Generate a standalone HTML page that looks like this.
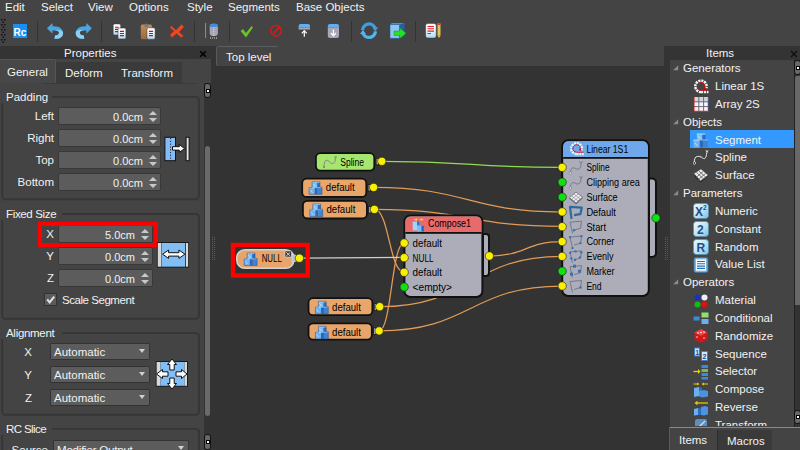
<!DOCTYPE html>
<html><head><meta charset="utf-8">
<style>
*{margin:0;padding:0;box-sizing:border-box}
html,body{width:800px;height:450px;overflow:hidden;background:#444;font-family:"Liberation Sans",sans-serif;font-size:11.5px;color:#f2f2f2}
.a{position:absolute}
.t{position:absolute;white-space:nowrap;line-height:14px}
#menu .t{top:0px}
.sep{position:absolute;top:21px;width:1px;height:21px;background:#333}
.inp{position:absolute;background:#5c5c5c;border:1px solid #383838;height:18px;border-radius:2px}
.inp .v{position:absolute;right:17px;top:2px;line-height:14px;color:#f2f2f2;font-size:11px}
.spin{position:absolute;right:3px;top:2.5px;width:8px;height:11px}
.grp{position:absolute;border:2px solid #363636;border-radius:4px}
.gl{position:absolute;height:2px;background:#363636}
.lbl{position:absolute;text-align:right;line-height:14px}
.dd{position:absolute;background:#5c5c5c;border:1px solid #333;height:17px;border-radius:1px}
.dd .v{position:absolute;left:3px;top:1px;line-height:14px}
.dd .ar{position:absolute;right:4px;top:5px;width:0;height:0;border-left:3.5px solid transparent;border-right:3.5px solid transparent;border-top:4px solid #d0d0d0}
.it{position:absolute;line-height:14px;white-space:nowrap}
.node{position:absolute;border:2px solid #111;border-radius:6px}
.dot{position:absolute;width:10px;height:10px;border-radius:50%;background:#f5f000;border:1px solid #222}
.dot.g{background:#10e010}
.nt{position:absolute;color:#111;font-size:11px;line-height:13px;white-space:nowrap}
</style></head><body>
<!-- menu -->
<div id="menu">
<div class="t" style="left:5px">Edit</div>
<div class="t" style="left:41px">Select</div>
<div class="t" style="left:88px">View</div>
<div class="t" style="left:129px">Options</div>
<div class="t" style="left:187px">Style</div>
<div class="t" style="left:228px">Segments</div>
<div class="t" style="left:296px">Base Objects</div>
</div>
<!-- toolbar -->
<div class="sep" style="left:37px"></div>
<div class="sep" style="left:101px"></div>
<div class="sep" style="left:194px"></div>
<div class="sep" style="left:229px"></div>
<div class="sep" style="left:351px"></div>
<div class="sep" style="left:415px"></div>

<!-- dark band under toolbar -->
<div class="a" style="left:0;top:46px;width:800px;height:404px;background:#343434"></div>

<!-- Properties panel -->
<div class="a" style="left:0;top:59px;width:204px;height:391px;background:#444"></div><div class="a" style="left:204px;top:59px;width:12px;height:391px;background:#333"></div><div class="a" style="left:204px;top:59px;width:7px;height:24px;background:#444"></div>
<div class="t" style="left:64px;top:46px">Properties</div>

<!-- props title -->
<svg class="a" style="left:199px;top:50px" width="8" height="8"><path d="M1.2 1.2L6.8 6.8M6.8 1.2L1.2 6.8" stroke="#000" stroke-width="1.6"/></svg>
<!-- tabs -->
<div class="a" style="left:55px;top:62px;width:127px;height:21px;background:#3a3a3a"></div>
<div class="a" style="left:0;top:59px;width:56px;height:24px;background:#474747;border-top:1px solid #555;border-right:1px solid #555;border-top-right-radius:2px"></div>
<div class="t" style="left:7px;top:65px">General</div>
<div class="t" style="left:65px;top:66px">Deform</div>
<div class="t" style="left:121px;top:66px">Transform</div>
<div class="a" style="left:43px;top:83px;width:153px;height:1px;background:#3a3a3a"></div>
<!-- Padding group -->
<svg class="a" style="left:0;top:0" width="210" height="450"><path d="M2.2 103V197.2L4.2 199.2H196.9L198.9 197.2V98.9L196.9 96.9H52M2.2 220V316.8L4.2 318.8H196.9L198.9 316.8V216L196.9 214H62M2.2 339V412.7L4.2 414.7H196.9L198.9 412.7V335.1L196.9 333.1H62M2.2 435V460M198.9 460V431L196.9 428.9H52" stroke="#363636" stroke-width="1.9" fill="none"/></svg>
<div class="t" style="left:6px;top:90px">Padding</div>
<div class="lbl" style="left:10px;width:44px;top:109px">Left</div>
<div class="lbl" style="left:10px;width:44px;top:131px">Right</div>
<div class="lbl" style="left:10px;width:44px;top:153px">Top</div>
<div class="lbl" style="left:10px;width:44px;top:175px">Bottom</div>
<div class="inp" style="left:58px;top:107px;width:103px"><div class="v">0.0cm</div><svg class="spin" viewBox="0 0 8 11"><path d="M0 4L4 0L8 4ZM0 7L8 7L4 11Z" fill="#c8c8c8"/></svg></div>
<div class="inp" style="left:58px;top:129px;width:103px"><div class="v">0.0cm</div><svg class="spin" viewBox="0 0 8 11"><path d="M0 4L4 0L8 4ZM0 7L8 7L4 11Z" fill="#c8c8c8"/></svg></div>
<div class="inp" style="left:58px;top:151px;width:103px"><div class="v">0.0cm</div><svg class="spin" viewBox="0 0 8 11"><path d="M0 4L4 0L8 4ZM0 7L8 7L4 11Z" fill="#c8c8c8"/></svg></div>
<div class="inp" style="left:58px;top:173px;width:103px"><div class="v">0.0cm</div><svg class="spin" viewBox="0 0 8 11"><path d="M0 4L4 0L8 4ZM0 7L8 7L4 11Z" fill="#c8c8c8"/></svg></div>
<svg class="a" style="left:164px;top:136px" width="27" height="26" viewBox="0 0 27 26">
<rect x="0.9" y="1.3" width="10.6" height="23.4" fill="#82bef5" stroke="#111" stroke-width="1"/>
<path d="M6.6 2V24" stroke="#2a2035" stroke-width="1" stroke-dasharray="1.2 1.6"/>
<path d="M8.5 10.7H15.3V8.5L20.6 12.6L15.3 16.4V14.1H8.5Z" fill="#fff" stroke="#111" stroke-width="1"/>
<rect x="22.1" y="1.3" width="3" height="23.4" fill="#e6e6e6" stroke="#111" stroke-width="1"/>
</svg>
<!-- Fixed size group -->
<div class="t" style="left:6px;top:207px;letter-spacing:-0.35px">Fixed Size</div>
<div class="lbl" style="left:30px;width:24px;top:227px">X</div>
<div class="lbl" style="left:30px;width:24px;top:249px">Y</div>
<div class="lbl" style="left:30px;width:24px;top:271px">Z</div>
<div class="inp" style="left:58px;top:225px;width:95px"><div class="v">5.0cm</div><svg class="spin" viewBox="0 0 8 11"><path d="M0 4L4 0L8 4ZM0 7L8 7L4 11Z" fill="#c8c8c8"/></svg></div>
<div class="inp" style="left:58px;top:247px;width:95px"><div class="v">0.0cm</div><svg class="spin" viewBox="0 0 8 11"><path d="M0 4L4 0L8 4ZM0 7L8 7L4 11Z" fill="#c8c8c8"/></svg></div>
<div class="inp" style="left:58px;top:269px;width:95px"><div class="v">0.0cm</div><svg class="spin" viewBox="0 0 8 11"><path d="M0 4L4 0L8 4ZM0 7L8 7L4 11Z" fill="#c8c8c8"/></svg></div>
<div class="a" style="left:38px;top:222px;width:120px;height:25px;border:4px solid #ff0000"></div>
<svg class="a" style="left:156px;top:241px" width="34" height="28" viewBox="0 0 34 28">
<rect x="0.9" y="1.2" width="32.1" height="25.3" fill="#111"/>
<rect x="1.7" y="2" width="3.8" height="23.7" fill="#d8d8d8"/>
<rect x="6" y="2" width="23.3" height="23.7" fill="#82bef5"/>
<rect x="30" y="2" width="2.2" height="23.7" fill="#d8d8d8"/>
<path d="M6.6 13.2L12.6 9V11.7H22.9V9L28.9 13.2L22.9 17.4V15.1H12.6V17.4Z" fill="#fff" stroke="#111" stroke-width="1"/>
</svg>
<div class="a" style="left:44px;top:293px;width:13px;height:13px;background:#5c5c5c;border:1px solid #333"></div>
<svg class="a" style="left:44px;top:293px" width="13" height="13"><path d="M3.2 6.4L5.6 9.3L10.2 3.6" stroke="#e2e2e2" stroke-width="2.1" fill="none"/></svg>
<div class="t" style="left:62px;top:293px;letter-spacing:-0.45px">Scale Segment</div>
<!-- Alignment group -->
<div class="t" style="left:6px;top:326px;letter-spacing:-0.3px">Alignment</div>
<div class="lbl" style="left:20px;width:12px;top:345px">X</div>
<div class="lbl" style="left:20px;width:12px;top:368px">Y</div>
<div class="lbl" style="left:20px;width:12px;top:391px">Z</div>
<div class="dd" style="left:50px;top:343px;width:100px"><div class="v">Automatic</div><div class="ar"></div></div>
<div class="dd" style="left:50px;top:366px;width:100px"><div class="v">Automatic</div><div class="ar"></div></div>
<div class="dd" style="left:50px;top:389px;width:100px"><div class="v">Automatic</div><div class="ar"></div></div>
<svg class="a" style="left:155px;top:358px" width="34" height="32" viewBox="0 0 34 32">
<rect x="0.8" y="3.2" width="32" height="25.4" fill="#111"/>
<rect x="1.6" y="4" width="3.9" height="23.8" fill="#d8d8d8"/>
<rect x="5.5" y="4" width="24.2" height="23.8" fill="#82bef5"/>
<rect x="29.7" y="4" width="2.3" height="23.8" fill="#d8d8d8"/>
<g fill="#fff" stroke="#111" stroke-width="1">
<path d="M17 1L21.5 6.5H19.2V12H14.8V6.5H12.5Z"/>
<path d="M17 31L21.5 25.5H19.2V20H14.8V25.5H12.5Z"/>
<path d="M1.5 16L7.5 11.5V13.8H13V18.2H7.5V20.5Z"/>
<path d="M32 16L26.5 11.5V13.8H21V18.2H26.5V20.5Z"/>
</g>
</svg>
<!-- RC slice -->
<div class="t" style="left:6px;top:422px;letter-spacing:-0.6px">RC Slice</div>
<div class="lbl" style="left:10px;width:38px;top:443px">Source</div>
<div class="dd" style="left:53px;top:440px;width:136px"><div class="v" style="top:2px;letter-spacing:-0.2px">Modifier Output</div><div class="ar"></div></div>
<!-- props scrollbar -->
<div class="a" style="left:205px;top:146px;width:5px;height:270px;background:#6a6a6a;border-radius:2.5px"></div>
<div class="a" style="left:204px;top:83px;width:7px;height:15px;background:#686868;border-radius:3px;border:1px solid #111"></div>
<div class="a" style="left:207px;top:90px;width:2px;height:2px;background:#fff;outline:1px solid #000"></div>
<div class="a" style="left:204px;top:434px;width:7px;height:16px;background:#686868;border-radius:3px;border:1px solid #111"></div>
<div class="a" style="left:207px;top:441px;width:2px;height:2px;background:#fff;outline:1px solid #000"></div>
<!-- canvas -->
<div class="a" style="left:216px;top:46px;width:448px;height:20px;background:#444"></div>
<div class="a" style="left:216px;top:66px;width:448px;height:384px;background:#333"></div>
<div class="a" style="left:216px;top:47px;width:1px;height:18px;background:#595959"></div><div class="a" style="left:218px;top:46px;width:60px;height:1px;background:#5e5e5e"></div>
<div class="t" style="left:226px;top:50px">Top level</div>
<!--CANVAS--><svg class="a" style="left:0;top:0" width="800" height="450" viewBox="0 0 800 450" font-family="Liberation Sans" >
<path d="M381.8 161.3C471.9 161.3 471.9 167.4 562 167.4" stroke="#90de50" stroke-width="1.25" fill="none"/>
<path d="M373.6 187.4C467.8 187.4 467.8 212 562 212" stroke="#e39c55" stroke-width="1.25" fill="none"/>
<path d="M374.4 209.4C468.2 209.4 468.2 226.4 562 226.4" stroke="#e39c55" stroke-width="1.25" fill="none"/>
<path d="M374.4 209.4C389.2 209.4 389.2 272 404 272" stroke="#e39c55" stroke-width="1.25" fill="none"/>
<path d="M379.1 330.9C391.55 330.9 391.55 243 404 243" stroke="#e39c55" stroke-width="1.25" fill="none"/>
<path d="M379.7 306.7C470.85 306.7 470.85 256.4 562 256.4" stroke="#e39c55" stroke-width="1.25" fill="none"/>
<path d="M379.1 330.9C470.55 330.9 470.55 286 562 286" stroke="#e39c55" stroke-width="1.25" fill="none"/>
<path d="M489.4 256C525.7 256 525.7 241.6 562 241.6" stroke="#e39c55" stroke-width="1.25" fill="none"/>
<path d="M302 258.2L404 257.4" stroke="#d0d0d0" stroke-width="1.3"/>
<rect x="315.9" y="153.20000000000002" width="58.39999999999999" height="17.399999999999988" rx="4.5" fill="#a6e66e" stroke="#111" stroke-width="1.8"/>
<path d="M324 166.8C324 163 324.5 160.5 327 160.2C328.5 160 329 162 330.5 163C332 163.8 334.5 163.5 335 161.5L335.5 157.3" stroke="#808080" stroke-width="0.9" fill="none"/><rect x="323" y="166" width="2" height="2" fill="#8a8a9a"/><rect x="334.6" y="156.2" width="2" height="2" fill="#8a8a9a"/>
<text x="340.3" y="165.5" font-size="10" fill="#000" textLength="23.7" lengthAdjust="spacingAndGlyphs">Spline</text>
<rect x="376.09999999999997" y="158.3" width="2.4" height="6.6" fill="#b4b4c4" stroke="#111" stroke-width="0.8"/>
<circle cx="381.8" cy="161.3" r="4.15" fill="#f8f000" stroke="#1a1a1a" stroke-width="0.6"/>
<rect x="302.2" y="178.70000000000002" width="64.09999999999998" height="18.2" rx="4.5" fill="#e9a66b" stroke="#111" stroke-width="1.8"/><g transform="translate(309.1,181.8)"><rect x="3" y="0.3" width="5" height="6.5" fill="#7dbdf5"/><rect x="8" y="0.8" width="2.8" height="6" fill="#2a6cc4"/><rect x="3" y="0" width="7.5" height="1" fill="#a8d8ff"/><path d="M4 2L6.5 5" stroke="#c8e8ff" stroke-width="0.8"/>
<rect x="0" y="5.8" width="5.6" height="6.7" fill="#6fb2f0"/><rect x="0" y="5.5" width="5.6" height="1" fill="#a8d8ff"/><path d="M1 8L3.5 11" stroke="#b8e0ff" stroke-width="0.8"/>
<rect x="5.6" y="5.8" width="3" height="6.7" fill="#2a68bc"/><rect x="8.6" y="5.8" width="4.3" height="6.7" fill="#3f84d4"/><rect x="5.6" y="5.3" width="7.3" height="1" fill="#7cb8f0"/><path d="M3 0H10.8V5.3H12.9V12.5H0V5.8H3Z" fill="none" stroke="#1d4f8f" stroke-width="0.5"/></g><text x="325.8" y="191.10000000000002" font-size="10" fill="#000" textLength="28.8" lengthAdjust="spacingAndGlyphs">default</text><rect x="368.09999999999997" y="184.4" width="2.4" height="6.6" fill="#b4b4c4" stroke="#111" stroke-width="0.8"/><circle cx="373.6" cy="187.4" r="4.15" fill="#f8f000" stroke="#1a1a1a" stroke-width="0.6"/>
<rect x="302.9" y="200.9" width="64.00000000000001" height="17.600000000000005" rx="4.5" fill="#e9a66b" stroke="#111" stroke-width="1.8"/><g transform="translate(309.8,204)"><rect x="3" y="0.3" width="5" height="6.5" fill="#7dbdf5"/><rect x="8" y="0.8" width="2.8" height="6" fill="#2a6cc4"/><rect x="3" y="0" width="7.5" height="1" fill="#a8d8ff"/><path d="M4 2L6.5 5" stroke="#c8e8ff" stroke-width="0.8"/>
<rect x="0" y="5.8" width="5.6" height="6.7" fill="#6fb2f0"/><rect x="0" y="5.5" width="5.6" height="1" fill="#a8d8ff"/><path d="M1 8L3.5 11" stroke="#b8e0ff" stroke-width="0.8"/>
<rect x="5.6" y="5.8" width="3" height="6.7" fill="#2a68bc"/><rect x="8.6" y="5.8" width="4.3" height="6.7" fill="#3f84d4"/><rect x="5.6" y="5.3" width="7.3" height="1" fill="#7cb8f0"/><path d="M3 0H10.8V5.3H12.9V12.5H0V5.8H3Z" fill="none" stroke="#1d4f8f" stroke-width="0.5"/></g><text x="326.5" y="213.3" font-size="10" fill="#000" textLength="28.8" lengthAdjust="spacingAndGlyphs">default</text><rect x="368.7" y="206.4" width="2.4" height="6.6" fill="#b4b4c4" stroke="#111" stroke-width="0.8"/><circle cx="374.4" cy="209.4" r="4.15" fill="#f8f000" stroke="#1a1a1a" stroke-width="0.6"/>
<rect x="308.5" y="298.2" width="63.89999999999999" height="17.00000000000001" rx="4.5" fill="#e9a66b" stroke="#111" stroke-width="1.8"/><g transform="translate(315.40000000000003,301.3)"><rect x="3" y="0.3" width="5" height="6.5" fill="#7dbdf5"/><rect x="8" y="0.8" width="2.8" height="6" fill="#2a6cc4"/><rect x="3" y="0" width="7.5" height="1" fill="#a8d8ff"/><path d="M4 2L6.5 5" stroke="#c8e8ff" stroke-width="0.8"/>
<rect x="0" y="5.8" width="5.6" height="6.7" fill="#6fb2f0"/><rect x="0" y="5.5" width="5.6" height="1" fill="#a8d8ff"/><path d="M1 8L3.5 11" stroke="#b8e0ff" stroke-width="0.8"/>
<rect x="5.6" y="5.8" width="3" height="6.7" fill="#2a68bc"/><rect x="8.6" y="5.8" width="4.3" height="6.7" fill="#3f84d4"/><rect x="5.6" y="5.3" width="7.3" height="1" fill="#7cb8f0"/><path d="M3 0H10.8V5.3H12.9V12.5H0V5.8H3Z" fill="none" stroke="#1d4f8f" stroke-width="0.5"/></g><text x="332.1" y="310.6" font-size="10" fill="#000" textLength="28.8" lengthAdjust="spacingAndGlyphs">default</text><rect x="374.2" y="303.7" width="2.4" height="6.6" fill="#b4b4c4" stroke="#111" stroke-width="0.8"/><circle cx="379.7" cy="306.7" r="4.15" fill="#f8f000" stroke="#1a1a1a" stroke-width="0.6"/>
<rect x="308.5" y="323.29999999999995" width="63.29999999999997" height="16.300000000000022" rx="4.5" fill="#e9a66b" stroke="#111" stroke-width="1.8"/><g transform="translate(315.40000000000003,326.4)"><rect x="3" y="0.3" width="5" height="6.5" fill="#7dbdf5"/><rect x="8" y="0.8" width="2.8" height="6" fill="#2a6cc4"/><rect x="3" y="0" width="7.5" height="1" fill="#a8d8ff"/><path d="M4 2L6.5 5" stroke="#c8e8ff" stroke-width="0.8"/>
<rect x="0" y="5.8" width="5.6" height="6.7" fill="#6fb2f0"/><rect x="0" y="5.5" width="5.6" height="1" fill="#a8d8ff"/><path d="M1 8L3.5 11" stroke="#b8e0ff" stroke-width="0.8"/>
<rect x="5.6" y="5.8" width="3" height="6.7" fill="#2a68bc"/><rect x="8.6" y="5.8" width="4.3" height="6.7" fill="#3f84d4"/><rect x="5.6" y="5.3" width="7.3" height="1" fill="#7cb8f0"/><path d="M3 0H10.8V5.3H12.9V12.5H0V5.8H3Z" fill="none" stroke="#1d4f8f" stroke-width="0.5"/></g><text x="332.1" y="335.7" font-size="10" fill="#000" textLength="28.8" lengthAdjust="spacingAndGlyphs">default</text><rect x="373.59999999999997" y="327.9" width="2.4" height="6.6" fill="#b4b4c4" stroke="#111" stroke-width="0.8"/><circle cx="379.1" cy="330.9" r="4.15" fill="#f8f000" stroke="#1a1a1a" stroke-width="0.6"/>
<rect x="233" y="245" width="74.7" height="30.5" fill="none" stroke="#ff0000" stroke-width="4.4"/>
<rect x="236.8" y="249.8" width="57" height="18.5" rx="8" fill="#e8a56b" stroke="#d2d2d2" stroke-width="1.6"/>
<g transform="translate(244.2,253)"><rect x="3" y="0.3" width="5" height="6.5" fill="#7dbdf5"/><rect x="8" y="0.8" width="2.8" height="6" fill="#2a6cc4"/><rect x="3" y="0" width="7.5" height="1" fill="#a8d8ff"/><path d="M4 2L6.5 5" stroke="#c8e8ff" stroke-width="0.8"/>
<rect x="0" y="5.8" width="5.6" height="6.7" fill="#6fb2f0"/><rect x="0" y="5.5" width="5.6" height="1" fill="#a8d8ff"/><path d="M1 8L3.5 11" stroke="#b8e0ff" stroke-width="0.8"/>
<rect x="5.6" y="5.8" width="3" height="6.7" fill="#2a68bc"/><rect x="8.6" y="5.8" width="4.3" height="6.7" fill="#3f84d4"/><rect x="5.6" y="5.3" width="7.3" height="1" fill="#7cb8f0"/><path d="M3 0H10.8V5.3H12.9V12.5H0V5.8H3Z" fill="none" stroke="#1d4f8f" stroke-width="0.5"/></g>
<text x="261.7" y="261.8" font-size="10" fill="#000" textLength="20.1" lengthAdjust="spacingAndGlyphs">NULL</text>
<rect x="285" y="251" width="6.5" height="6" fill="#333" stroke="#ddd" stroke-width="0.6"/><path d="M286.3 252.3L290.2 256M290.2 252.3L286.3 256" stroke="#eee" stroke-width="0.9"/>
<path d="M292 254L296.5 255.5L296.5 261L292 262.5Z" fill="#c0c0c8" stroke="#ddd" stroke-width="0.6"/>
<circle cx="299.4" cy="258.2" r="4.15" fill="#f8f000" stroke="#1a1a1a" stroke-width="0.6"/>
<path d="M483 234H486A3 3 0 0 1 489 237V273A3 3 0 0 1 486 276H483Z" fill="#adadb9" stroke="#111" stroke-width="2"/>
<rect x="404.4" y="215.4" width="78" height="81.6" rx="6" fill="#adadb9" stroke="#111" stroke-width="2"/>
<path d="M405.4 232V222A5.6 5.6 0 0 1 411 216.4H476A5.6 5.6 0 0 1 481.4 222V232Z" fill="#e96a6a"/>
<rect x="405.4" y="232" width="76" height="1.8" fill="#111"/>
<g transform="translate(412.5,218.5)"><path d="M1 1H4.5M7 1H11" stroke="#f5c400" stroke-width="1.1"/><circle cx="3.8" cy="1" r="1" fill="#ffee00"/><circle cx="9" cy="1" r="1" fill="#ffee00"/><rect x="0.2" y="3.1" width="4.5" height="8.8" fill="#9fd4ff"/><rect x="4.7" y="3.1" width="2" height="8.8" fill="#2a6cc4"/><rect x="4.5" y="6.7" width="4.5" height="6.2" fill="#7dbdf5"/><rect x="9" y="6.7" width="2.3" height="6.2" fill="#2a64b8"/><rect x="4.5" y="6.3" width="6.8" height="1" fill="#5a9ee8"/></g>
<text x="428" y="227.4" font-size="10" fill="#000" textLength="43" lengthAdjust="spacingAndGlyphs">Compose1</text>
<text x="412.6" y="246.8" font-size="10" fill="#000" textLength="29.4" lengthAdjust="spacingAndGlyphs">default</text>
<circle cx="404.2" cy="243.0" r="4.15" fill="#f8f000" stroke="#1a1a1a" stroke-width="0.6"/>
<text x="412.6" y="261.5" font-size="10" fill="#000" textLength="21" lengthAdjust="spacingAndGlyphs">NULL</text>
<circle cx="404.2" cy="257.7" r="4.15" fill="#f8f000" stroke="#1a1a1a" stroke-width="0.6"/>
<text x="412.6" y="276.1" font-size="10" fill="#000" textLength="29.4" lengthAdjust="spacingAndGlyphs">default</text>
<circle cx="404.2" cy="272.3" r="4.15" fill="#f8f000" stroke="#1a1a1a" stroke-width="0.6"/>
<text x="412.6" y="290.8" font-size="10" fill="#000" textLength="39.4" lengthAdjust="spacingAndGlyphs">&lt;empty&gt;</text>
<circle cx="404.2" cy="287.0" r="4.15" fill="#10e010" stroke="#1a1a1a" stroke-width="0.6"/>
<circle cx="489.4" cy="256" r="4.15" fill="#f8f000" stroke="#1a1a1a" stroke-width="0.6"/>
<path d="M649 178.5H652A4 4 0 0 1 656 182.5V253A4 4 0 0 1 652 257H649Z" fill="#adadb9" stroke="#111" stroke-width="2"/>
<rect x="562.2" y="140.2" width="86.6" height="155.8" rx="6" fill="#adadb9" stroke="#111" stroke-width="2"/>
<path d="M563.2 157V147A5.6 5.6 0 0 1 568.8 141.2H642.2A5.6 5.6 0 0 1 647.8 147V157Z" fill="#6fa8ea"/>
<rect x="563.2" y="157" width="84.6" height="1.8" fill="#111"/>
<g transform="translate(569,141.5) scale(0.95)"><path d="M8 13A5.6 5.6 0 1 1 13.3 9.1" fill="none" stroke="#eef4fa" stroke-width="2.7" stroke-dasharray="2.1 0.8"/><path d="M8 13H15.5" stroke="#eef4fa" stroke-width="2.7" stroke-dasharray="2.1 0.8"/><path d="M8 11.2A3.9 3.9 0 1 1 11.7 8.5" fill="none" stroke="#d01010" stroke-width="1"/><path d="M8 11.4H15.5" stroke="#d01010" stroke-width="0.8"/><circle cx="11.7" cy="8.7" r="1" fill="#e00"/></g>
<text x="586.4" y="153.3" font-size="10" fill="#000" textLength="41.8" lengthAdjust="spacingAndGlyphs">Linear 1S1</text>
<text x="586.4" y="171.2" font-size="10" fill="#000" textLength="23.2" lengthAdjust="spacingAndGlyphs">Spline</text>
<circle cx="562.2" cy="167.4" r="4.15" fill="#f8f000" stroke="#1a1a1a" stroke-width="0.6"/>
<g transform="translate(569,160.9)"><path d="M1.5 12C1.5 8 3 6.5 5 7C7 7.5 8 9 10 8C11.5 7 12 5 12 2.5M12 2.5L10.5 0.5M12 2.5L13.5 0.5" stroke="#6a7484" stroke-width="0.9" fill="none"/><circle cx="1.5" cy="12.3" r="1.2" fill="#f0f0f4" stroke="#6a7484" stroke-width="0.7"/></g>
<text x="586.4" y="186.0" font-size="10" fill="#000" textLength="53.4" lengthAdjust="spacingAndGlyphs">Clipping area</text>
<circle cx="562.2" cy="182.2" r="4.15" fill="#10e010" stroke="#1a1a1a" stroke-width="0.6"/>
<g transform="translate(569,175.7)"><path d="M1.5 12C1.5 8 3 6.5 5 7C7 7.5 8 9 10 8C11.5 7 12 5 12 2.5M12 2.5L10.5 0.5M12 2.5L13.5 0.5" stroke="#6a7484" stroke-width="0.9" fill="none"/><circle cx="1.5" cy="12.3" r="1.2" fill="#f0f0f4" stroke="#6a7484" stroke-width="0.7"/></g>
<text x="586.4" y="200.9" font-size="10" fill="#000" textLength="31.2" lengthAdjust="spacingAndGlyphs">Surface</text>
<circle cx="562.2" cy="197.1" r="4.15" fill="#10e010" stroke="#1a1a1a" stroke-width="0.6"/>
<g transform="translate(569,190.6)"><path d="M0.5 7L7 1.5L13.5 6.5L7 12.5Z" fill="#f2f2f6" stroke="#6a6a70" stroke-width="0.8"/><path d="M2.7 5.2L9.2 10.7M4.8 3.3L11.3 8.5M4.8 10.7L11.3 5.2M2.7 8.8L9.2 3.3" stroke="#8a8a90" stroke-width="0.7"/><path d="M0.5 7L7 12.5L13.5 6.5L13.5 8L7 14L0.5 8.5Z" fill="#707078"/></g>
<text x="586.4" y="215.7" font-size="10" fill="#000" textLength="29.4" lengthAdjust="spacingAndGlyphs">Default</text>
<circle cx="562.2" cy="211.9" r="4.15" fill="#f8f000" stroke="#1a1a1a" stroke-width="0.6"/>
<g transform="translate(569,205.4)"><path d="M2.5 13.5L1 1.5L12.8 2.3L11.3 8.8L5 9.8" stroke="#2d6aa0" stroke-width="2.2" fill="none" stroke-linejoin="round"/></g>
<text x="586.4" y="230.5" font-size="10" fill="#000" textLength="19.6" lengthAdjust="spacingAndGlyphs">Start</text>
<circle cx="562.2" cy="226.7" r="4.15" fill="#f8f000" stroke="#1a1a1a" stroke-width="0.6"/>
<g transform="translate(569,220.2)"><path d="M3.5 13L1 2L12.5 1L11.5 8L5 10" stroke="#6a7484" stroke-width="0.9" fill="none"/><circle cx="5" cy="10" r="1.2" fill="#3a70b0"/></g>
<text x="586.4" y="245.4" font-size="10" fill="#000" textLength="28" lengthAdjust="spacingAndGlyphs">Corner</text>
<circle cx="562.2" cy="241.6" r="4.15" fill="#f8f000" stroke="#1a1a1a" stroke-width="0.6"/>
<g transform="translate(569,235.1)"><path d="M3.5 13L1 2L12.5 1L11.5 8L5 10" stroke="#6a7484" stroke-width="0.9" fill="none"/><circle cx="1" cy="2" r="1.2" fill="#3a70b0"/><circle cx="12.5" cy="1" r="1.2" fill="#3a70b0"/><circle cx="11.5" cy="8" r="1.2" fill="#3a70b0"/><circle cx="3.5" cy="13" r="1.2" fill="#3a70b0"/></g>
<text x="586.4" y="260.2" font-size="10" fill="#000" textLength="27.2" lengthAdjust="spacingAndGlyphs">Evenly</text>
<circle cx="562.2" cy="256.4" r="4.15" fill="#f8f000" stroke="#1a1a1a" stroke-width="0.6"/>
<g transform="translate(569,249.9)"><path d="M3.5 13L1 2L12.5 1L11.5 8L5 10" stroke="#6a7484" stroke-width="0.9" fill="none"/><circle cx="1.2" cy="3" r="1.2" fill="#3a70b0"/><circle cx="6.5" cy="1.5" r="1.2" fill="#3a70b0"/><circle cx="12.3" cy="2.5" r="1.2" fill="#3a70b0"/><circle cx="11" cy="7.5" r="1.2" fill="#3a70b0"/><circle cx="6" cy="9.8" r="1.2" fill="#3a70b0"/><circle cx="2.3" cy="8.5" r="1.2" fill="#3a70b0"/></g>
<text x="586.4" y="275.0" font-size="10" fill="#000" textLength="28" lengthAdjust="spacingAndGlyphs">Marker</text>
<circle cx="562.2" cy="271.2" r="4.15" fill="#10e010" stroke="#1a1a1a" stroke-width="0.6"/>
<g transform="translate(569,264.7)"><path d="M3.5 13L1 2L12.5 1L11.5 8L5 10" stroke="#6a7484" stroke-width="0.9" fill="none"/><rect x="4" y="0" width="3" height="3" fill="#3a70b0"/><rect x="9" y="5" width="3" height="3" fill="#3a70b0"/><rect x="1" y="8" width="3" height="3" fill="#3a70b0"/></g>
<text x="586.4" y="289.8" font-size="10" fill="#000" textLength="15.2" lengthAdjust="spacingAndGlyphs">End</text>
<circle cx="562.2" cy="286.0" r="4.15" fill="#f8f000" stroke="#1a1a1a" stroke-width="0.6"/>
<g transform="translate(569,279.5)"><path d="M3.5 13L1 2L12.5 1L11.5 8L5 10" stroke="#6a7484" stroke-width="0.9" fill="none"/><circle cx="11.5" cy="8" r="1.2" fill="#3a70b0"/></g>
<circle cx="656" cy="218" r="4.15" fill="#10e010" stroke="#1a1a1a" stroke-width="0.6"/>
</svg><!--/CANVAS-->

<!-- Items panel -->
<div class="a" style="left:664px;top:46px;width:136px;height:14px;background:#343434"></div><div class="a" style="left:664px;top:60px;width:136px;height:390px;background:#333"></div>
<div class="a" style="left:670px;top:60px;width:125px;height:367px;background:#444"></div>
<div class="t" style="left:706px;top:46px">Items</div>

<!--ITEMS--><svg width="0" height="0" style="position:absolute"><defs><linearGradient id="pg" x1="0" y1="0" x2="1" y2="1"><stop offset="0" stop-color="#f0faff"/><stop offset="0.5" stop-color="#bfe6f6"/><stop offset="1" stop-color="#7cc0e8"/></linearGradient></defs></svg>
<div class="a" style="left:670px;top:60px;width:124px;height:366px;background:#444;overflow:hidden">
<svg class="a" style="left:3px;top:5.1px" width="6" height="6"><path d="M5.2 0.3V5.3H0.2Z" fill="#8a8a8a"/></svg>
<div class="it" style="left:13px;top:1.2px">Generators</div>
<svg class="a" style="left:23px;top:18.6px" width="16" height="16" viewBox="0 0 16 16"><path d="M8 13A5.6 5.6 0 1 1 13.3 9.1" fill="none" stroke="#eef4fa" stroke-width="2.7" stroke-dasharray="2.1 0.8"/><path d="M8 13H15.5" stroke="#eef4fa" stroke-width="2.7" stroke-dasharray="2.1 0.8"/><path d="M8 11.2A3.9 3.9 0 1 1 11.7 8.5" fill="none" stroke="#d01010" stroke-width="1"/><path d="M8 11.4H15.5" stroke="#d01010" stroke-width="0.8"/><circle cx="11.7" cy="8.7" r="1" fill="#e00"/></svg>
<div class="it" style="left:45px;top:19.1px">Linear 1S</div>
<svg class="a" style="left:23px;top:36.4px" width="16" height="16" viewBox="0 0 16 16"><rect x="1" y="1" width="14.5" height="14.5" fill="#f4f4f8"/><rect x="1" y="1" width="14.5" height="4.8" fill="#d4d4dc"/><path d="M1 5.8H15.5M1 10.6H15.5M5.8 1V15.5M10.6 1V15.5" stroke="#6a6a78" stroke-width="1"/><path d="M15.3 1V15" stroke="#1a2a5a" stroke-width="0.8"/><path d="M1 0.5V15.3H15.5" stroke="#e01010" stroke-width="1" fill="none"/></svg>
<div class="it" style="left:45px;top:36.9px">Array 2S</div>
<svg class="a" style="left:3px;top:58.6px" width="6" height="6"><path d="M5.2 0.3V5.3H0.2Z" fill="#8a8a8a"/></svg>
<div class="it" style="left:13px;top:54.7px">Objects</div>
<div class="a" style="left:20px;top:70.3px;width:104px;height:18px;background:#3399ff"></div>
<svg class="a" style="left:23px;top:72.1px" width="16" height="16" viewBox="0 0 16 16"><g transform="translate(0.5,1.5) scale(1.12)"><rect x="3" y="0.3" width="5" height="6.5" fill="#7dbdf5"/><rect x="8" y="0.8" width="2.8" height="6" fill="#2a6cc4"/><rect x="3" y="0" width="7.5" height="1" fill="#a8d8ff"/><path d="M4 2L6.5 5" stroke="#c8e8ff" stroke-width="0.8"/><rect x="0" y="5.8" width="5.6" height="6.7" fill="#6fb2f0"/><rect x="0" y="5.5" width="5.6" height="1" fill="#a8d8ff"/><path d="M1 8L3.5 11" stroke="#b8e0ff" stroke-width="0.8"/><rect x="5.6" y="5.8" width="3" height="6.7" fill="#2a68bc"/><rect x="8.6" y="5.8" width="4.3" height="6.7" fill="#3f84d4"/><rect x="5.6" y="5.3" width="7.3" height="1" fill="#7cb8f0"/></g></svg>
<div class="it" style="left:45px;top:72.6px">Segment</div>
<svg class="a" style="left:23px;top:89.9px" width="16" height="16" viewBox="0 0 16 16"><path d="M1.3 12.5C1.3 9 2 6.5 4.5 6.4C6 6.3 7 6.5 7.8 6.8C9 7.3 10.3 9 11.6 8.6C13 8 13.3 5.5 14 2M14 2L13 0.3M14 2L15 0.3" stroke="#e8e8e8" stroke-width="1" fill="none"/><circle cx="1.3" cy="13" r="1.3" fill="#222" stroke="#e8e8e8" stroke-width="0.8"/><circle cx="7.6" cy="6.7" r="0.9" fill="#bbb"/></svg>
<div class="it" style="left:45px;top:90.4px">Spline</div>
<svg class="a" style="left:23px;top:107.7px" width="16" height="16" viewBox="0 0 16 16"><path d="M1 6.5L2.5 10L8 14.5L15 8.5L8 2.3Z" fill="#2a2a2a"/><path d="M1 5.8L8 1.3L15 7.3L7.5 13Z" fill="#ececec"/><path d="M3.3 4.3L10 10.4M5.7 2.8L12.5 8.9M3.5 9.2L10.3 3.3M5.9 11L12.7 5.3" stroke="#5a5a5a" stroke-width="0.8"/><path d="M1 5.8L7.5 13L15 7.3" stroke="#555" stroke-width="0.8" fill="none"/></svg>
<div class="it" style="left:45px;top:108.2px">Surface</div>
<svg class="a" style="left:3px;top:129.9px" width="6" height="6"><path d="M5.2 0.3V5.3H0.2Z" fill="#8a8a8a"/></svg>
<div class="it" style="left:13px;top:126.0px">Parameters</div>
<svg class="a" style="left:23px;top:143.4px" width="16" height="16" viewBox="0 0 16 16"><rect x="0.5" y="0.5" width="15" height="15" rx="3" fill="url(#pg)" stroke="#5a8fb0" stroke-width="0.8"/><text x="2" y="13" font-size="12" font-weight="bold" fill="#1d4f8a" font-family="Liberation Sans">X</text><text x="10" y="7" font-size="6.5" font-weight="bold" fill="#1d4f8a" font-family="Liberation Sans">2</text></svg>
<div class="it" style="left:45px;top:143.9px">Numeric</div>
<svg class="a" style="left:23px;top:161.2px" width="16" height="16" viewBox="0 0 16 16"><rect x="0.5" y="0.5" width="15" height="15" rx="3" fill="url(#pg)" stroke="#5a8fb0" stroke-width="0.8"/><text x="4" y="13" font-size="12" font-weight="bold" fill="#1d4f8a" font-family="Liberation Sans">2</text></svg>
<div class="it" style="left:45px;top:161.7px">Constant</div>
<svg class="a" style="left:23px;top:179.0px" width="16" height="16" viewBox="0 0 16 16"><rect x="0.5" y="0.5" width="15" height="15" rx="3" fill="url(#pg)" stroke="#5a8fb0" stroke-width="0.8"/><text x="3.5" y="13" font-size="12" font-weight="bold" fill="#1d4f8a" font-family="Liberation Sans">R</text></svg>
<div class="it" style="left:45px;top:179.5px">Random</div>
<svg class="a" style="left:23px;top:196.9px" width="16" height="16" viewBox="0 0 16 16"><rect x="1" y="0.5" width="14" height="15" rx="2" fill="#7ab4e0" stroke="#3d6f98" stroke-width="0.8"/><rect x="3" y="2.3" width="10" height="11.4" fill="#f4faff"/><path d="M4 4.5H12M4 6.8H12M4 9.1H12M4 11.4H12" stroke="#2a70b8" stroke-width="1.1"/></svg>
<div class="it" style="left:45px;top:197.4px">Value List</div>
<svg class="a" style="left:3px;top:219.1px" width="6" height="6"><path d="M5.2 0.3V5.3H0.2Z" fill="#8a8a8a"/></svg>
<div class="it" style="left:13px;top:215.2px">Operators</div>
<svg class="a" style="left:23px;top:232.5px" width="16" height="16" viewBox="0 0 16 16"><circle cx="4.5" cy="4.5" r="3" fill="#1530d0"/><circle cx="11.5" cy="4.5" r="3" fill="#f0f0f0"/><circle cx="4.5" cy="11.5" r="3" fill="#10c010"/><circle cx="11.5" cy="11.5" r="3" fill="#e01010"/></svg>
<div class="it" style="left:45px;top:233.0px">Material</div>
<svg class="a" style="left:23px;top:250.3px" width="16" height="16" viewBox="0 0 16 16"><rect x="0.5" y="6.5" width="6" height="4" fill="#3d8ad8"/><rect x="8.5" y="2.5" width="7" height="5" fill="#90e070"/><rect x="8.5" y="9" width="7" height="5" fill="#6ab0f0"/></svg>
<div class="it" style="left:45px;top:250.8px">Conditional</div>
<svg class="a" style="left:23px;top:268.2px" width="16" height="16" viewBox="0 0 16 16"><path d="M8 1L14.5 4.5L14.5 11.5L8 15L1.5 11.5L1.5 4.5Z" fill="#d01818"/><path d="M8 1L14.5 4.5L8 8L1.5 4.5Z" fill="#f04040"/><circle cx="5" cy="5" r="0.8" fill="#fff"/><circle cx="8" cy="4.5" r="0.8" fill="#fff"/><circle cx="11" cy="4" r="0.8" fill="#fff"/><circle cx="4" cy="9" r="0.8" fill="#fcc"/><circle cx="11" cy="10" r="0.8" fill="#fcc"/></svg>
<div class="it" style="left:45px;top:268.7px">Randomize</div>
<svg class="a" style="left:23px;top:286.0px" width="16" height="16" viewBox="0 0 16 16"><rect x="1" y="1.5" width="6" height="9" fill="#3d7ccc"/><rect x="2" y="2.5" width="4" height="7" fill="#cfe8ff"/><text x="2.3" y="9" font-size="7" font-weight="bold" fill="#1d4f8a" font-family="Liberation Sans">1</text><rect x="8" y="5" width="7" height="10" fill="#3d7ccc"/><rect x="9" y="6" width="5" height="8" fill="#cfe8ff"/><text x="9.5" y="13" font-size="7" font-weight="bold" fill="#1d4f8a" font-family="Liberation Sans">2</text></svg>
<div class="it" style="left:45px;top:286.5px">Sequence</div>
<svg class="a" style="left:23px;top:303.8px" width="16" height="16" viewBox="0 0 16 16"><path d="M0.5 7.5H6" stroke="#f0d000" stroke-width="1.3"/><path d="M5 5L7.5 7.5L5 10Z" fill="#f0d000"/><rect x="8.5" y="1" width="6.5" height="3" fill="#3d8ad8"/><rect x="8.5" y="5" width="6.5" height="3" fill="#70c050"/><rect x="8.5" y="9" width="6.5" height="3" fill="#3d8ad8"/><rect x="8.5" y="13" width="6.5" height="2.5" fill="#3d8ad8"/></svg>
<div class="it" style="left:45px;top:304.3px">Selector</div>
<svg class="a" style="left:23px;top:321.7px" width="16" height="16" viewBox="0 0 16 16"><path d="M0.5 2H5M10 2H15" stroke="#f0d000" stroke-width="1.2"/><path d="M4 0.5L6.5 2L4 3.5ZM11 0.5L8.5 2L11 3.5Z" fill="#f0d000"/><path d="M1 6L6 5L6 14L1 15Z" fill="#6ab0f0"/><path d="M6 5L9 6L9 14L6 14Z" fill="#2d6cc0"/><path d="M6 9L11 8L15 9L15 14.5L10 15.5L6 14.5Z" fill="#4d92dc"/></svg>
<div class="it" style="left:45px;top:322.2px">Compose</div>
<svg class="a" style="left:23px;top:339.5px" width="16" height="16" viewBox="0 0 16 16"><path d="M3 3H15" stroke="#f0d000" stroke-width="1.2"/><path d="M4.5 0.8L1.5 3L4.5 5.2Z" fill="#f0d000"/><path d="M1 9L5 8L5 15L1 15.5Z" fill="#6ab0f0"/><path d="M5 8L8 8.5L8 15L5 15Z" fill="#2d6cc0"/><path d="M8 7L12 6L15 7L15 14.5L11 15.5L8 15Z" fill="#4d92dc"/></svg>
<div class="it" style="left:45px;top:340.0px">Reverse</div>
<svg class="a" style="left:23px;top:357.3px" width="16" height="16" viewBox="0 0 16 16"><rect x="2" y="2" width="12" height="12" rx="2" fill="#5a8fc0"/><path d="M4 12L12 4" stroke="#ddd" stroke-width="1.3"/></svg>
<div class="it" style="left:45px;top:357.8px">Transform</div>
</div>
<div class="a" style="left:794px;top:60px;width:6px;height:367px;background:#333;border-left:1px solid #222"></div>
<div class="a" style="left:795px;top:76px;width:5px;height:229px;background:#686868;border-radius:2px 0 0 0"></div>
<div class="a" style="left:794px;top:60px;width:7px;height:15px;background:#686868;border-radius:3px;border:1px solid #111"></div>
<div class="a" style="left:797px;top:67px;width:2px;height:2px;background:#fff;outline:1px solid #000"></div>
<div class="a" style="left:794px;top:410px;width:7px;height:14px;background:#686868;border-radius:3px;border:1px solid #111"></div>
<div class="a" style="left:797px;top:416px;width:2px;height:2px;background:#fff;outline:1px solid #000"></div>
<svg class="a" style="left:790px;top:50px" width="8" height="8"><path d="M1 1L7 7M7 1L1 7" stroke="#111" stroke-width="1.5"/></svg>
<div class="a" style="left:664px;top:427px;width:136px;height:23px;background:#444"></div>
<div class="a" style="left:664px;top:427px;width:5px;height:23px;background:#333"></div>
<div class="a" style="left:669px;top:427px;width:131px;height:1px;background:#8a8a8a"></div>
<div class="a" style="left:669px;top:427px;width:1px;height:23px;background:#5a5a5a"></div>
<div class="a" style="left:717px;top:430px;width:55px;height:20px;background:#3a3a3a;border-left:1px solid #2e2e2e"></div>
<div class="t" style="left:679px;top:433px">Items</div>
<div class="t" style="left:727px;top:434px">Macros</div><!--/ITEMS-->
<!--TOOLBAR--><svg class="a" style="left:0;top:15px" width="450" height="30" viewBox="0 15 450 30">
<!-- grip -->
<g fill="#111"><rect x="1" y="19" width="1.5" height="1.5"/><rect x="4" y="19" width="1.5" height="1.5"/><rect x="2.5" y="21.5" width="1.5" height="1.5"/><rect x="1" y="24" width="1.5" height="1.5"/><rect x="4" y="24" width="1.5" height="1.5"/><rect x="2.5" y="26.5" width="1.5" height="1.5"/><rect x="1" y="29" width="1.5" height="1.5"/><rect x="4" y="29" width="1.5" height="1.5"/><rect x="2.5" y="31.5" width="1.5" height="1.5"/><rect x="1" y="34" width="1.5" height="1.5"/><rect x="4" y="34" width="1.5" height="1.5"/><rect x="2.5" y="36.5" width="1.5" height="1.5"/><rect x="1" y="39" width="1.5" height="1.5"/><rect x="4" y="39" width="1.5" height="1.5"/><rect x="2.5" y="41.5" width="1.5" height="1.5"/></g>
<!-- Rc -->
<rect x="13" y="24" width="14" height="14" fill="#1a8ff0"/>
<text x="13.6" y="35.6" font-family="Liberation Sans" font-size="10" font-weight="bold" fill="#fff">Rc</text>
<defs><linearGradient id="doc" x1="0" y1="0" x2="0" y2="1"><stop offset="0" stop-color="#ffffff"/><stop offset="0.45" stop-color="#f2f8fc"/><stop offset="1" stop-color="#a8d8f8"/></linearGradient>
<linearGradient id="clip" x1="0" y1="0" x2="0" y2="1"><stop offset="0" stop-color="#c88a50"/><stop offset="1" stop-color="#9a6a3e"/></linearGradient></defs>
<!-- undo -->
<path d="M46.9 28.3L52.5 23.1V26.3C59 25.8 63.1 28.8 63.1 33C63.1 36.6 60 38.8 56 38.8H54.5L55 35.5C57.5 35.3 59 34.5 59 32.8C59 30.8 56 30.2 52.5 30.5V33.7Z" fill="#4aa6e0"/>
<path d="M55 35.5C57.5 35.3 59 34.5 59 32.8C59 31 57 30.3 55 30.3C60 29.5 63.1 31 63.1 33C63.1 36.6 60 38.8 56 38.8H54.5Z" fill="#8ccff6"/>
<g transform="translate(138.8,0) scale(-1,1)">
<path d="M46.9 28.3L52.5 23.1V26.3C59 25.8 63.1 28.8 63.1 33C63.1 36.6 60 38.8 56 38.8H54.5L55 35.5C57.5 35.3 59 34.5 59 32.8C59 30.8 56 30.2 52.5 30.5V33.7Z" fill="#4aa6e0"/>
<path d="M55 35.5C57.5 35.3 59 34.5 59 32.8C59 31 57 30.3 55 30.3C60 29.5 63.1 31 63.1 33C63.1 36.6 60 38.8 56 38.8H54.5Z" fill="#8ccff6"/>
</g>
<!-- copy -->
<rect x="113.2" y="23.9" width="7.5" height="11.1" rx="1.5" fill="url(#doc)" stroke="#2a3a44" stroke-width="0.5"/>
<path d="M115 27.3H118.7M115 29.4H118.7M115 31.6H118.7" stroke="#ee0000" stroke-width="1.1"/>
<rect x="118" y="28.1" width="7.9" height="10.8" rx="1.5" fill="url(#doc)" stroke="#2a3a44" stroke-width="0.5"/>
<path d="M120 31.4H124M120 33.5H124M120 35.6H124" stroke="#ee0000" stroke-width="1.1"/>
<!-- paste -->
<rect x="140.8" y="24.5" width="11.1" height="14.7" rx="1.5" fill="url(#clip)"/>
<path d="M144 26.8L146.3 22.9L148.6 26.8Z" fill="#707880"/>
<rect x="147" y="27.8" width="8.1" height="11.4" rx="1.5" fill="url(#doc)" stroke="#2a3a44" stroke-width="0.5"/>
<path d="M149 31.4H153M149 33.5H153M149 35.6H153" stroke="#ee0000" stroke-width="1.1"/>
<!-- delete X -->
<path d="M171.5 26L176 30.2L181.5 24.5L184 27L179 32L183.5 36L181 37.5L176.5 33.5L172 37.5L170 35L174 31L169.8 27.5Z" fill="#ee4a22" stroke="#c22" stroke-width="0.5"/>
<!-- icon4 -->
<path d="M205.6 23.5V38" stroke="#ddd" stroke-width="1" stroke-dasharray="1 1"/>
<path d="M210 38H217" stroke="#ddd" stroke-width="1" stroke-dasharray="1 1"/>
<rect x="209.7" y="23.7" width="8.2" height="12.2" rx="3" fill="#a6a6b4"/>
<path d="M209.7 27V26.5A4.1 2.8 0 0 1 217.9 26.5V27Z" fill="#3b8ee0"/>
<path d="M213.8 27V36" stroke="#fff" stroke-width="0.6" stroke-dasharray="1 1"/>
<!-- check -->
<path d="M240.6 31L243 29L246 33L251.5 26L253 27.5L246 37.5Z" fill="#6cc02a"/>
<!-- no -->
<circle cx="276" cy="30.8" r="5.3" fill="none" stroke="#e01515" stroke-width="1.6"/>
<path d="M272.3 34.5L279.7 27.1" stroke="#e01515" stroke-width="1.6"/>
<!-- up -->
<path d="M298.6 27V26A2 2 0 0 1 300.6 24H308A2 2 0 0 1 310 26V27Z" fill="#62aef0"/>
<rect x="298.6" y="27.3" width="11.4" height="2.2" fill="#a8a8b4"/>
<path d="M304.3 36.8V31M301.8 33.3L304.3 30.6L306.8 33.3" stroke="#fff" stroke-width="1.2" fill="none"/>
<!-- down -->
<path d="M327.8 27V26A2 2 0 0 1 329.8 24H337A2 2 0 0 1 339 26V27Z" fill="#62aef0"/>
<path d="M327.8 27.3H339V36A2 2 0 0 1 337 38H329.8A2 2 0 0 1 327.8 36Z" fill="#a8a8b4"/>
<path d="M333.4 29.5V35.5M330.9 33L333.4 35.8L335.9 33" stroke="#fff" stroke-width="1.2" fill="none"/>
<!-- refresh -->
<path d="M362.6 30A6.4 6.4 0 0 1 375 28.2" stroke="#3c9fe0" stroke-width="3.3" fill="none"/>
<path d="M372.3 27.3L378.2 27.3L375.3 31.6Z" fill="#3c9fe0"/>
<path d="M375.4 31.4A6.4 6.4 0 0 1 363 33.2" stroke="#56b4ec" stroke-width="3.3" fill="none"/>
<path d="M360 34.1L365.9 34.1L363 29.8Z" fill="#56b4ec"/>
<!-- export -->
<path d="M390 24.5L392 23H404.5V36.3L399.5 38.3H390Z" fill="#2460a8"/>
<path d="M390 24.5L392 23H404.5L399.5 24.5Z" fill="#4a90d8"/>
<rect x="390" y="24.5" width="9.5" height="13.8" fill="#8cc6f4"/>
<path d="M390 24.5H399.5V38.3H390Z" fill="none" stroke="#1d4f8f" stroke-width="0.5"/>
<path d="M394 31H399.8V28L406 33.2L399.8 38.4V35.5H394Z" fill="#28e028" stroke="#119911" stroke-width="0.5"/>
<!-- list -->
<rect x="425.6" y="23.6" width="10.6" height="14.4" rx="2" fill="url(#doc)" stroke="#2a3a44" stroke-width="0.5"/>
<path d="M427.5 26.5H434M427.5 28.8H434M427.5 31.1H434M427.5 33.5H431" stroke="#ee2020" stroke-width="1.1"/>
<rect x="437.5" y="23.6" width="3" height="12" fill="#e8c050"/>
<path d="M437.5 35.6L439 38L440.5 35.6Z" fill="#e8c050"/>
<rect x="437.5" y="23.6" width="3" height="1.5" fill="#d04040"/>
</svg>
<!--/TOOLBAR-->
<svg class="a" style="left:0;top:0" width="800" height="450"><g fill="#5c5c5c"><rect x="212" y="237" width="1" height="1"/><rect x="212" y="239" width="1" height="1"/><rect x="212" y="241" width="1" height="1"/><rect x="212" y="243" width="1" height="1"/><rect x="212" y="245" width="1" height="1"/><rect x="212" y="247" width="1" height="1"/><rect x="212" y="249" width="1" height="1"/><rect x="212" y="251" width="1" height="1"/><rect x="212" y="253" width="1" height="1"/><rect x="212" y="255" width="1" height="1"/><rect x="212" y="257" width="1" height="1"/><rect x="212" y="259" width="1" height="1"/><rect x="214" y="237" width="1" height="1"/><rect x="214" y="239" width="1" height="1"/><rect x="214" y="241" width="1" height="1"/><rect x="214" y="243" width="1" height="1"/><rect x="214" y="245" width="1" height="1"/><rect x="214" y="247" width="1" height="1"/><rect x="214" y="249" width="1" height="1"/><rect x="214" y="251" width="1" height="1"/><rect x="214" y="253" width="1" height="1"/><rect x="214" y="255" width="1" height="1"/><rect x="214" y="257" width="1" height="1"/><rect x="214" y="259" width="1" height="1"/><rect x="665" y="237" width="1" height="1"/><rect x="665" y="239" width="1" height="1"/><rect x="665" y="241" width="1" height="1"/><rect x="665" y="243" width="1" height="1"/><rect x="665" y="245" width="1" height="1"/><rect x="665" y="247" width="1" height="1"/><rect x="665" y="249" width="1" height="1"/><rect x="665" y="251" width="1" height="1"/><rect x="665" y="253" width="1" height="1"/><rect x="665" y="255" width="1" height="1"/><rect x="665" y="257" width="1" height="1"/><rect x="665" y="259" width="1" height="1"/><rect x="667" y="237" width="1" height="1"/><rect x="667" y="239" width="1" height="1"/><rect x="667" y="241" width="1" height="1"/><rect x="667" y="243" width="1" height="1"/><rect x="667" y="245" width="1" height="1"/><rect x="667" y="247" width="1" height="1"/><rect x="667" y="249" width="1" height="1"/><rect x="667" y="251" width="1" height="1"/><rect x="667" y="253" width="1" height="1"/><rect x="667" y="255" width="1" height="1"/><rect x="667" y="257" width="1" height="1"/><rect x="667" y="259" width="1" height="1"/></g></svg>
</body></html>
